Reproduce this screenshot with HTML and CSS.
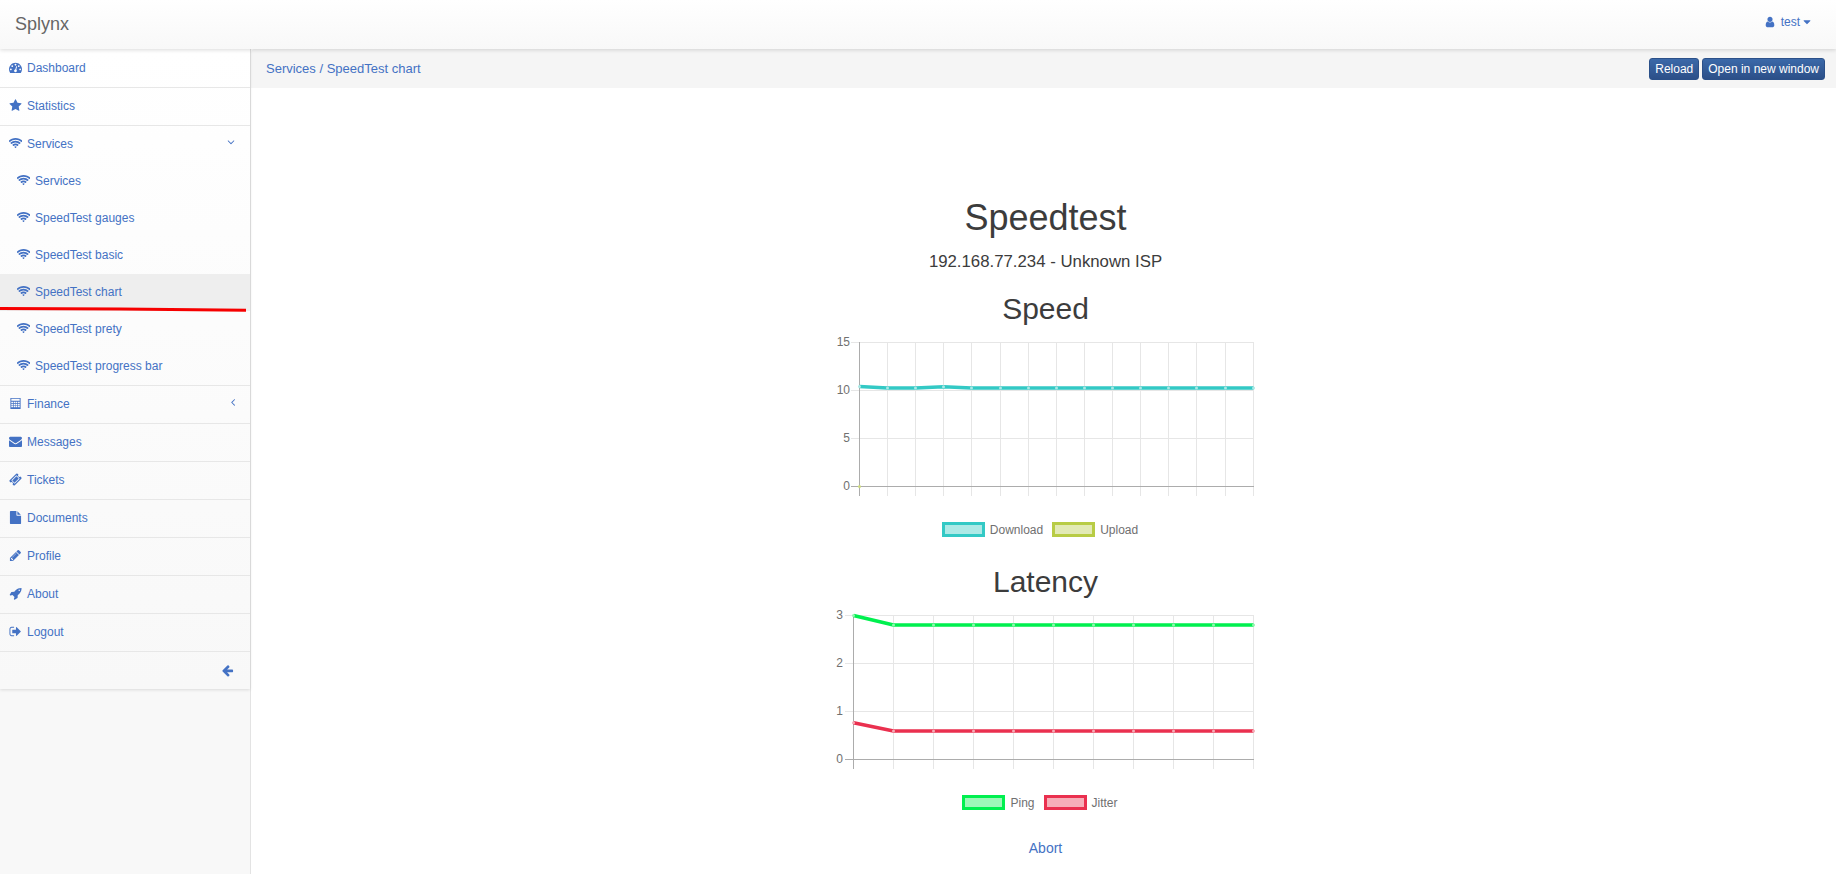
FILE: index.html
```html
<!DOCTYPE html>
<html lang="en">
<head>
  <meta charset="UTF-8">
  <title>Splynx - SpeedTest chart</title>
  <meta name="viewport" content="width=device-width, initial-scale=1.0">
  <link rel="stylesheet" href="styles.css">
</head>
<body>

  <svg class="icon-defs" xmlns="http://www.w3.org/2000/svg">
    <symbol id="i-dashboard" viewBox="0 0 1792 1792"><path d="M384 1152q0-53-37.5-90.5t-90.5-37.5-90.5 37.5-37.5 90.5 37.5 90.5 90.5 37.5 90.5-37.5 37.5-90.5zm192-448q0-53-37.5-90.5t-90.5-37.5-90.5 37.5-37.5 90.5 37.5 90.5 90.5 37.5 90.5-37.5 37.5-90.5zm428 481l101-382q6-26-7.5-48.5t-38.5-29.5-48 6.5-30 39.5l-101 382q-60 5-107 43.5t-63 98.5q-20 77 20 146t117 89 146-20 89-117q16-60-6-117t-72-91zm660-33q0-53-37.5-90.5t-90.5-37.5-90.5 37.5-37.5 90.5 37.5 90.5 90.5 37.5 90.5-37.5 37.5-90.5zm-640-640q0-53-37.5-90.5t-90.5-37.5-90.5 37.5-37.5 90.5 37.5 90.5 90.5 37.5 90.5-37.5 37.5-90.5zm448 192q0-53-37.5-90.5t-90.5-37.5-90.5 37.5-37.5 90.5 37.5 90.5 90.5 37.5 90.5-37.5 37.5-90.5zm320 448q0 261-141 483-19 29-54 29h-1402q-35 0-54-29-141-221-141-483 0-182 71-348t191-286 286-191 348-71 348 71 286 191 191 286 71 348z"/></symbol>
    <symbol id="i-star" viewBox="0 0 1792 1792"><path d="M1728 647q0 22-26 48l-363 354 86 500q1 7 1 20 0 21-10.5 35.5t-30.5 14.5q-19 0-40-12l-449-236-449 236q-22 12-40 12-21 0-31.5-14.5t-10.5-35.5q0-6 2-20l86-500-364-354q-25-27-25-48 0-37 56-46l502-73 225-455q19-41 49-41t49 41l225 455 502 73q56 9 56 46z"/></symbol>
    <symbol id="i-wifi" viewBox="0 0 1792 1792"><path d="M896 1523q-20 0-93-73.5t-73-93.5q0-32 62.5-54t103.5-22 103.5 22 62.5 54q0 20-73 93.5t-93 73.5zm270-271q-2 0-40-25t-101.5-50-128.5-25-128.5 25-101 50-40.5 25q-18 0-93.5-75t-75.5-93q0-13 10-23 78-77 196-121t233-44 233 44 196 121q10 10 10 23 0 18-75.5 93t-93.5 75zm273-272q-11 0-23-8-136-105-252-154.5t-268-49.5q-85 0-170.5 22t-149 53-113.5 62-79 53-31 22q-17 0-92-75t-75-93q0-12 10-22 132-132 320-205t380-73 380 73 320 205q10 10 10 22 0 18-75 93t-92 75zm271-271q-11 0-22-9-179-157-371.5-236.5t-407.5-79.5-407.5 79.5-371.5 236.5q-11 9-22 9-17 0-92.5-75t-75.5-93q0-13 10-23 187-186 445-288t513-102 513 102 445 288q10 10 10 23 0 18-75.5 93t-92.5 75z"/></symbol>
    <symbol id="i-calculator" viewBox="0 0 1792 1792"><path fill-rule="evenodd" d="M192 128h1408v1536H192zM320 256v256h1152V256zM320 640v192h224V640zm320 0v192h224V640zm288 0v192h224V640zm320 0v192h224V640zM320 928v192h224V928zm320 0v192h224V928zm288 0v192h224V928zm320 0v192h224V928zM320 1216v192h224v-192zm320 0v192h224v-192zm288 0v192h224v-192zm320 0v192h224v-192z"/></symbol>
    <symbol id="i-envelope" viewBox="0 0 1792 1792"><path d="M1792 710v794q0 66-47 113t-113 47h-1472q-66 0-113-47t-47-113v-794q44 49 101 87 362 246 497 345 57 42 92.5 65.5t94.5 48 110 24.5h2q51 0 110-24.5t94.5-48 92.5-65.5q170-123 498-345 57-39 100-87zm0-294q0 79-49 151t-122 123q-376 261-468 325-10 7-42.5 30.5t-54 38-52 32.5-57.5 27-50 9h-2q-23 0-50-9t-57.5-27-52-32.5-54-38-42.5-30.5q-91-64-262-182.5t-205-142.5q-62-42-117-115.5t-55-136.5q0-78 41.5-130t118.5-52h1472q65 0 112.5 47t47.5 113z"/></symbol>
    <symbol id="i-ticket" viewBox="0 0 1792 1792"><path d="M1024 452l316 316-572 572-316-316zm-211 979l618-618q19-19 19-45t-19-45l-362-362q-18-18-45-18t-45 18l-618 618q-19 19-19 45t19 45l362 362q18 18 45 18t45-18zm889-637l-907 908q-37 37-90.5 37t-90.5-37l-126-126q56-56 56-136t-56-136-136-56-136 56l-125-126q-37-37-37-90.5t37-90.5l907-906q37-37 90.5-37t90.5 37l125 125q-56 56-56 136t56 136 136 56 136-56l126 125q37 37 37 90.5t-37 90.5z"/></symbol>
    <symbol id="i-file" viewBox="0 0 1792 1792"><path d="M1152 512v-472q22 14 36 28l408 408q14 14 28 36h-472zm-128 32q0 40 28 68t68 28h544v1056q0 40-28 68t-68 28h-1344q-40 0-68-28t-28-68v-1600q0-40 28-68t68-28h800v544z"/></symbol>
    <symbol id="i-pencil" viewBox="0 0 1792 1792"><path d="M491 1536l91-91-235-235-91 91v107h128v128h107zm523-928q0-22-22-22-10 0-17 7l-542 542q-7 7-7 17 0 22 22 22 10 0 17-7l542-542q7-7 7-17zm-54-192l416 416-832 832h-416v-416zm683 96q0 53-37 90l-166 166-416-416 166-165q36-38 90-38 53 0 91 38l235 234q37 39 37 91z"/></symbol>
    <symbol id="i-rocket" viewBox="0 0 1792 1792"><path d="M1504 448q0-40-28-68t-68-28-68 28-28 68 28 68 68 28 68-28 28-68zm224-288q0 249-75.5 430.5t-253.5 360.5q-81 80-195 176l-20 379q-2 16-16 26l-384 224q-7 4-16 4-12 0-23-9l-64-64q-13-14-8-32l85-276-281-281-276 85q-3 1-9 1-14 0-23-9l-64-64q-17-19-5-39l224-384q10-14 26-16l379-20q96-114 176-195 188-187 358-258t431-71q14 0 24 9.5t10 22.5z"/></symbol>
    <symbol id="i-signout" viewBox="0 0 1792 1792"><path d="M704 1440q0 4 1 20t.5 26.5-3 23.5-10 19.5-20.5 6.5h-320q-119 0-203.5-84.5t-84.5-203.5v-704q0-119 84.5-203.5t203.5-84.5h320q13 0 22.5 9.5t9.5 22.5q0 4 1 20t.5 26.5-3 23.5-10 19.5-20.5 6.5h-320q-66 0-113 47t-47 113v704q0 66 47 113t113 47h312l11.5 1 11.5 3 8 5.5 7 9 2 13.5zm928-544q0 26-19 45l-544 544q-19 19-45 19t-45-19-19-45v-288h-448q-26 0-45-19t-19-45v-384q0-26 19-45t45-19h448v-288q0-26 19-45t45-19 45 19l544 544q19 19 19 45z"/></symbol>
    <symbol id="i-arrow-left" viewBox="0 0 1792 1792"><path d="M1664 896v128q0 53-32.5 90.5t-84.5 37.5h-704l293 294q38 36 38 90t-38 90l-75 76q-37 37-90 37-52 0-91-37l-651-652q-37-37-37-90 0-52 37-91l651-650q38-38 91-38 52 0 90 38l75 74q38 38 38 91t-38 91l-293 293h704q52 0 84.5 37.5t32.5 90.5z"/></symbol>
    <symbol id="i-user" viewBox="0 0 1792 1792"><path d="M1536 1399q0 109-62.5 187t-150.5 78h-854q-88 0-150.5-78t-62.5-187q0-85 8.5-160.5t31.5-152 58.5-131 94-89 134.5-34.5q131 128 313 128t313-128q76 0 134.5 34.5t94 89 58.5 131 31.5 152 8.5 160.5zm-256-887q0 159-112.5 271.5t-271.5 112.5-271.5-112.5-112.5-271.5 112.5-271.5 271.5-112.5 271.5 112.5 112.5 271.5z"/></symbol>
    <symbol id="i-caret-down" viewBox="0 0 1792 1792"><path d="M1408 704q0 26-19 45l-448 448q-19 19-45 19t-45-19l-448-448q-19-19-19-45t19-45 45-19h896q26 0 45 19t19 45z"/></symbol>
    <symbol id="i-angle-down" viewBox="0 0 1792 1792"><path d="M1395 736q0 13-10 23l-466 466q-10 10-23 10t-23-10l-466-466q-10-10-10-23t10-23l50-50q10-10 23-10t23 10l393 393 393-393q10-10 23-10t23 10l50 50q10 10 10 23z"/></symbol>
    <symbol id="i-angle-left" viewBox="0 0 1792 1792"><path d="M1203 544q0 13-10 23l-393 393 393 393q10 10 10 23t-10 23l-50 50q-10 10-23 10t-23-10l-466-466q-10-10-10-23t10-23l466-466q10-10 23-10t23 10l50 50q10 10 10 23z"/></symbol>
    <marker id="dot-download" markerWidth="6" markerHeight="6" refX="3" refY="3" markerUnits="userSpaceOnUse"><circle class="dot dot-download" cx="3" cy="3" r="1.5"/></marker>
    <marker id="dot-ping" markerWidth="6" markerHeight="6" refX="3" refY="3" markerUnits="userSpaceOnUse"><circle class="dot dot-ping" cx="3" cy="3" r="1.5"/></marker>
    <marker id="dot-jitter" markerWidth="6" markerHeight="6" refX="3" refY="3" markerUnits="userSpaceOnUse"><circle class="dot dot-jitter" cx="3" cy="3" r="1.5"/></marker>
  </svg>

  <header class="topbar">
    <a href="#" class="brand">Splynx</a>
    <a href="#" class="user-menu">
      <svg class="icon icon-user"><use href="#i-user"/></svg>
      <span>test</span>
      <svg class="icon icon-caret"><use href="#i-caret-down"/></svg>
    </a>
  </header>

  <div class="wrapper">
    <aside class="sidebar">
      <nav class="side-nav">
        <a href="#" class="nav-item"><svg class="icon"><use href="#i-dashboard"/></svg>Dashboard</a>
        <a href="#" class="nav-item"><svg class="icon"><use href="#i-star"/></svg>Statistics</a>
        <div class="nav-group">
          <a href="#" class="nav-item nav-open"><svg class="icon"><use href="#i-wifi"/></svg>Services<svg class="icon icon-angle"><use href="#i-angle-down"/></svg></a>
          <a href="#" class="nav-sub"><svg class="icon"><use href="#i-wifi"/></svg>Services</a>
          <a href="#" class="nav-sub"><svg class="icon"><use href="#i-wifi"/></svg>SpeedTest gauges</a>
          <a href="#" class="nav-sub"><svg class="icon"><use href="#i-wifi"/></svg>SpeedTest basic</a>
          <a href="#" class="nav-sub active"><svg class="icon"><use href="#i-wifi"/></svg>SpeedTest chart</a>
          <a href="#" class="nav-sub"><svg class="icon"><use href="#i-wifi"/></svg>SpeedTest prety</a>
          <a href="#" class="nav-sub"><svg class="icon"><use href="#i-wifi"/></svg>SpeedTest progress bar</a>
        </div>
        <a href="#" class="nav-item"><svg class="icon"><use href="#i-calculator"/></svg>Finance<svg class="icon icon-angle icon-angle-left"><use href="#i-angle-left"/></svg></a>
        <a href="#" class="nav-item"><svg class="icon"><use href="#i-envelope"/></svg>Messages</a>
        <a href="#" class="nav-item"><svg class="icon"><use href="#i-ticket"/></svg>Tickets</a>
        <a href="#" class="nav-item"><svg class="icon"><use href="#i-file"/></svg>Documents</a>
        <a href="#" class="nav-item"><svg class="icon"><use href="#i-pencil"/></svg>Profile</a>
        <a href="#" class="nav-item"><svg class="icon"><use href="#i-rocket"/></svg>About</a>
        <a href="#" class="nav-item"><svg class="icon"><use href="#i-signout"/></svg>Logout</a>
        <div class="nav-toggle"><svg class="icon"><use href="#i-arrow-left"/></svg></div>
      </nav>
      <!-- red underline someone drew on the screenshot -->
      <svg class="red-mark" width="250" height="6"><path d="M0 1.5 L120 2 L246 3.2" /></svg>
    </aside>

    <main class="content">
      <div class="breadcrumb-bar">
        <div class="breadcrumb"><a href="#">Services</a> / <a href="#">SpeedTest chart</a></div>
        <div class="actions">
          <button class="btn">Reload</button>
          <button class="btn">Open in new window</button>
        </div>
      </div>

      <section class="speedtest">
        <h1>Speedtest</h1>
        <p class="ip">192.168.77.234 - Unknown ISP</p>

        <h2>Speed</h2>
        <svg class="chart" width="427" height="170">
          <path class="grid" d="M21 7.5H424M21 55.5H424M21 103.5H424M57.5 7V161M85.5 7V161M113.5 7V161M141.5 7V161M170.5 7V161M198.5 7V161M226.5 7V161M254.5 7V161M282.5 7V161M310.5 7V161M338.5 7V161M366.5 7V161M395.5 7V161M423.5 7V161"/>
          <path class="axis" d="M29.5 7V161M21 151.5H424"/>
          <text class="tick" x="20" y="11">15</text>
          <text class="tick" x="20" y="59">10</text>
          <text class="tick" x="20" y="107">5</text>
          <text class="tick" x="20" y="155">0</text>
          <circle class="dot-upload" cx="29.5" cy="151.5" r="1.5"/>
          <polyline class="line line-download" points="29.5,51.5 57.5,53 85.5,53 113.5,51.7 141.5,53 170.5,53 198.5,53 226.5,53 254.5,53 282.5,53 310.5,53 338.5,53 366.5,53 395.5,53 423.5,53"/>
        </svg>
        <div class="legend">
          <span class="legend-item"><i class="swatch swatch-download"></i>Download</span>
          <span class="legend-item"><i class="swatch swatch-upload"></i>Upload</span>
        </div>

        <h2 class="second">Latency</h2>
        <svg class="chart" width="427" height="170">
          <path class="grid" d="M15 7.5H424M15 55.5H424M15 103.5H424M63.5 7V161M103.5 7V161M143.5 7V161M183.5 7V161M223.5 7V161M263.5 7V161M303.5 7V161M343.5 7V161M383.5 7V161M423.5 7V161"/>
          <path class="axis" d="M23.5 7V161M15 151.5H424"/>
          <text class="tick" x="13" y="11">3</text>
          <text class="tick" x="13" y="59">2</text>
          <text class="tick" x="13" y="107">1</text>
          <text class="tick" x="13" y="155">0</text>
          <polyline class="line line-ping" points="23.5,7.5 63.5,17 103.5,17 143.5,17 183.5,17 223.5,17 263.5,17 303.5,17 343.5,17 383.5,17 423.5,17"/>
          <polyline class="line line-jitter" points="23.5,114.7 63.5,123 103.5,123 143.5,123 183.5,123 223.5,123 263.5,123 303.5,123 343.5,123 383.5,123 423.5,123"/>
        </svg>
        <div class="legend">
          <span class="legend-item"><i class="swatch swatch-ping"></i>Ping</span>
          <span class="legend-item"><i class="swatch swatch-jitter"></i>Jitter</span>
        </div>

        <a href="#" class="abort">Abort</a>
      </section>
    </main>
  </div>

</body>
</html>
```

FILE: styles.css
```css
* {
  box-sizing: border-box;
}
html, body {
  height: 100%;
}
body {
  margin: 0;
  display: flex;
  flex-direction: column;
  overflow: hidden;
  font-family: 'Liberation Sans', Arial, sans-serif;
  font-size: 12px;
  color: #3c3c3c;
  background: #fff;
}
a {
  color: #4472c4;
  text-decoration: none;
}
.icon-defs {
  position: absolute;
  width: 0;
  height: 0;
}
.icon {
  width: 13px;
  height: 13px;
  fill: currentColor;
  flex: none;
}

/* top bar */
.topbar {
  position: relative;
  z-index: 2;
  flex: none;
  height: 49px;
  display: flex;
  align-items: center;
  justify-content: space-between;
  padding: 0 23px 0 15px;
  background: linear-gradient(to bottom, #fff, #f8f8f8);
  box-shadow: 0 1px 4px rgba(0, 0, 0, 0.15);
}
.brand {
  color: #666;
  font-size: 18px;
}
.user-menu {
  display: flex;
  align-items: center;
  margin-top: -5px;
}
.icon-user {
  width: 12px;
  height: 12px;
  margin-right: 5px;
}
.icon-caret {
  width: 12px;
  height: 12px;
  margin-left: 1px;
}

/* sidebar */
.wrapper {
  flex: 1;
  display: flex;
  min-height: 0;
}
.sidebar {
  position: relative;
  flex: none;
  width: 251px;
  background: #f8f8f8;
  border-right: 1px solid #e3e3e3;
}
.side-nav {
  padding-top: 1px;
  background: linear-gradient(to bottom, #fff, #f8f8f8);
  box-shadow: 0 1px 3px rgba(0, 0, 0, 0.12);
}
.nav-item, .nav-sub {
  display: flex;
  align-items: center;
  gap: 5px;
  height: 38px;
  padding: 0 13px 2px 9px;
  border-bottom: 1px solid #e7e7e7;
}
.nav-sub {
  height: 37px;
  padding-left: 17px;
  border-bottom: 0;
}
.nav-open {
  height: 37px;
  border-bottom: 0;
}
.nav-group {
  border-bottom: 1px solid #e7e7e7;
}
.nav-sub.active {
  background: #eee;
}
.icon-angle {
  width: 12px;
  height: 12px;
  margin-left: auto;
  margin-top: -4px;
}
.icon-angle-left {
  margin-right: -2px;
}
.nav-toggle {
  height: 37px;
  display: flex;
  align-items: center;
  justify-content: flex-end;
  padding: 0 16px 1px 0;
  color: #4472c4;
}
.red-mark {
  position: absolute;
  left: 0;
  top: 258px;
  fill: none;
  stroke: #f60000;
  stroke-width: 3;
}

/* content */
.content {
  flex: 1;
  min-width: 0;
}
.breadcrumb-bar {
  height: 39px;
  display: flex;
  align-items: center;
  justify-content: space-between;
  padding: 0 11px 0 15px;
  background: #f5f5f5;
  border-top-left-radius: 4px;
  font-size: 13px;
  color: #4472c4;
}
.actions {
  display: flex;
  gap: 3px;
}
.btn {
  height: 22px;
  padding: 0 5px;
  font-family: inherit;
  font-size: 12px;
  color: #fff;
  background: linear-gradient(to bottom, #3b69a9, #2c4f88);
  border: 1px solid #2b5089;
  border-radius: 3px;
}
.speedtest {
  display: flex;
  flex-direction: column;
  align-items: center;
  padding-top: 110px;
  padding-left: 4px;
}
h1 {
  margin: 0;
  font-size: 36px;
  font-weight: 400;
  line-height: 40px;
}
.ip {
  margin: 15px 0 0;
  font-size: 16.8px;
  line-height: 18px;
}
h2 {
  margin: 21px 0 0;
  font-size: 30px;
  font-weight: 400;
  line-height: 34px;
}
h2.second {
  margin-top: 28px;
}

/* charts */
.chart {
  display: block;
  margin: 9px 4px 0 0;
}
.grid {
  fill: none;
  stroke: #e6e6e6;
}
.axis {
  fill: none;
  stroke: #acacac;
}
.tick {
  font-size: 12px;
  fill: #707070;
  text-anchor: end;
}
.line {
  fill: none;
  stroke-width: 3.5;
  stroke-linejoin: round;
}
.line-download {
  stroke: #33c9c5;
  marker: url(#dot-download);
}
.line-ping {
  stroke: #00f04f;
  marker: url(#dot-ping);
}
.line-jitter {
  stroke: #ea304f;
  marker: url(#dot-jitter);
}
.dot {
  stroke: none;
}
.dot-download {
  fill: #a9e8e5;
}
.dot-ping {
  fill: #8ff7ae;
}
.dot-jitter {
  fill: #f5aab6;
}
.dot-upload {
  fill: #cddc7c;
}
.legend {
  display: flex;
  justify-content: center;
  margin: 17px 2px 0 0;
  height: 15px;
  color: #707070;
}
.legend-item {
  display: flex;
  align-items: center;
  gap: 5px;
  margin-right: 9px;
}
.swatch {
  display: block;
  width: 43px;
  height: 15px;
  border: 3px solid;
}
.swatch-download {
  border-color: #33c9c5;
  background: #ade9e6;
}
.swatch-upload {
  border-color: #b8cc45;
  background: #e2eab5;
}
.swatch-ping {
  border-color: #00f04f;
  background: #9cf8b8;
}
.swatch-jitter {
  border-color: #ea304f;
  background: #f6aeb9;
}
.abort {
  margin-top: 30px;
  font-size: 14px;
  line-height: 16px;
}
```
